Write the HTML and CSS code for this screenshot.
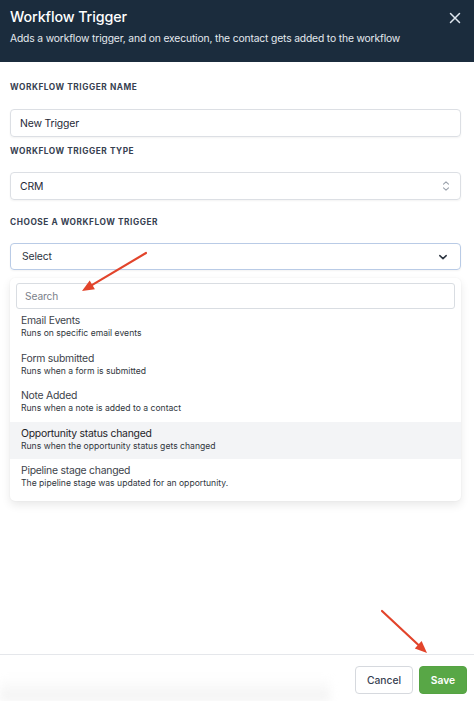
FILE: index.html
```html
<!DOCTYPE html>
<html lang="en">
<head>
<meta charset="utf-8">
<title>Workflow Trigger</title>
<link rel="stylesheet" href="styles.css">
</head>
<body>
<div class="page">
  <header class="header">
    <div class="header-text">
      <h1 class="title">Workflow Trigger</h1>
      <p class="subtitle">Adds a workflow trigger, and on execution, the contact gets added to the workflow</p>
    </div>
    <button class="close" aria-label="Close">
      <svg width="12" height="12" viewBox="0 0 12 12"><path d="M1.5 1.5L10.5 10.5M10.5 1.5L1.5 10.5" stroke="#dfe6ee" stroke-width="1.5" stroke-linecap="round"/></svg>
    </button>
  </header>

  <main class="content">
    <div class="field field-name">
      <label class="label">Workflow Trigger Name</label>
      <div class="input">New Trigger</div>
    </div>
    <div class="field field-type">
      <label class="label">Workflow Trigger Type</label>
      <div class="input select">
        <span>CRM</span>
        <svg class="updown" width="8" height="12" viewBox="0 0 8 12"><path d="M1.5 4.2L4 1.8L6.5 4.2M1.5 7.8L4 10.2L6.5 7.8" fill="none" stroke="#9aa1ab" stroke-width="1.1" stroke-linecap="round" stroke-linejoin="round"/></svg>
      </div>
    </div>
    <div class="field field-trigger">
      <label class="label">Choose a Workflow Trigger</label>
      <div class="input select focus">
        <span>Select</span>
        <svg class="chev" width="10" height="8" viewBox="0 0 10 8"><path d="M1.8 2.6L5 5.6L8.2 2.6" fill="none" stroke="#2d3540" stroke-width="1.5" stroke-linecap="round" stroke-linejoin="round"/></svg>
      </div>
    </div>

    <div class="dropdown">
      <div class="search">Search</div>
      <ul class="options">
        <li class="option"><span class="opt-title">Email Events</span><span class="opt-desc">Runs on specific email events</span></li>
        <li class="option"><span class="opt-title">Form submitted</span><span class="opt-desc">Runs when a form is submitted</span></li>
        <li class="option"><span class="opt-title">Note Added</span><span class="opt-desc">Runs when a note is added to a contact</span></li>
        <li class="option active"><span class="opt-title">Opportunity status changed</span><span class="opt-desc">Runs when the opportunity status gets changed</span></li>
        <li class="option"><span class="opt-title">Pipeline stage changed</span><span class="opt-desc">The pipeline stage was updated for an opportunity.</span></li>
      </ul>
    </div>
  </main>

  <footer class="footer">
    <button class="btn btn-cancel">Cancel</button>
    <button class="btn btn-save">Save</button>
  </footer>

  <svg class="annotations" width="474" height="701" viewBox="0 0 474 701">
    <line x1="146" y1="253" x2="92.3" y2="284.9" stroke="#e2442b" stroke-width="2.2" stroke-linecap="round"/>
    <polygon points="82,291 94.9,289.2 89.7,280.6" fill="#e2442b"/>
    <line x1="382" y1="611" x2="418.2" y2="644.8" stroke="#e2442b" stroke-width="2.2" stroke-linecap="round"/>
    <polygon points="427,653 414.8,648.5 421.6,641.1" fill="#e2442b"/>
  </svg>
</div>
</body>
</html>
```

FILE: styles.css
```css
* {
  box-sizing: border-box;
}

html, body {
  margin: 0;
  padding: 0;
  background: #ffffff;
}

body {
  font-family: Inter, "Noto Sans", "Liberation Sans", sans-serif;
  color: #1f2937;
}

.page {
  position: relative;
  width: 474px;
  height: 701px;
  display: flex;
  flex-direction: column;
  overflow: hidden;
}

.header {
  background: #1b2c3d;
  height: 62px;
  padding: 7px 12px 0 10px;
  display: flex;
  justify-content: space-between;
  align-items: flex-start;
}

.title {
  margin: 0;
  font-size: 14.3px;
  line-height: 20px;
  font-weight: 500;
  color: #ffffff;
  letter-spacing: -0.1px;
}

.subtitle {
  margin: 3px 0 0;
  font-size: 10.3px;
  line-height: 16px;
  color: #e4e9ef;
  letter-spacing: -0.15px;
}

.close {
  background: none;
  border: 0;
  padding: 0;
  margin-top: 4px;
  width: 14px;
  height: 14px;
  display: flex;
  align-items: center;
  justify-content: center;
}

.content {
  flex: 1;
  padding: 18px 13px 0 10px;
  display: flex;
  flex-direction: column;
}

.field {
  display: flex;
  flex-direction: column;
}

.label {
  font-size: 8.3px;
  line-height: 14px;
  font-weight: 700;
  letter-spacing: 0.55px;
  text-transform: uppercase;
  color: #374151;
}

.field-name .label { margin-bottom: 15px; }
.field-type { margin-top: 7px; }
.field-type .label { margin-bottom: 14px; }
.field-trigger { margin-top: 15px; }
.field-trigger .label { margin-bottom: 14px; }

.input {
  height: 28px;
  border: 1px solid #dcdfe4;
  border-radius: 4px;
  padding: 0 9px;
  display: flex;
  align-items: center;
  font-size: 10.4px;
  letter-spacing: -0.15px;
  color: #1f2937;
  box-shadow: 0 1px 2px rgba(0, 0, 0, 0.05);
}

.select {
  justify-content: space-between;
}

.updown {
  margin-right: 1px;
}

.focus {
  height: 27px;
  border-color: #b9cbe6;
  padding: 0 12px 0 11px;
  color: #2b333d;
}

.dropdown {
  margin-top: 8px;
  border-radius: 5px;
  background: #ffffff;
  box-shadow: 0 4px 10px rgba(0, 0, 0, 0.09), 0 0 2px rgba(0, 0, 0, 0.06);
  padding: 5px 0 4px;
}

.search {
  margin: 0 6px;
  height: 26px;
  border: 1px solid #d9dde2;
  border-radius: 3px;
  padding: 0 8px;
  display: flex;
  align-items: center;
  font-size: 10.2px;
  letter-spacing: -0.1px;
  color: #7b818a;
}

.options {
  list-style: none;
  margin: 0;
  padding: 0;
}

.option {
  display: flex;
  flex-direction: column;
  padding: 5px 11px 6.6px;
}

.option.active {
  background: #f3f4f6;
}

.opt-title {
  font-size: 10.4px;
  line-height: 13px;
  letter-spacing: -0.25px;
  color: #3d434b;
}

.option.active .opt-title {
  color: #1f2328;
}

.opt-desc {
  font-size: 8.6px;
  line-height: 13px;
  color: #30363d;
}

.footer {
  position: relative;
  height: 47px;
  border-top: 1px solid #e5e7eb;
  display: flex;
  justify-content: flex-end;
  align-items: flex-start;
  gap: 6px;
  padding: 11px 7px 0 0;
}

.footer::before {
  content: "";
  position: absolute;
  left: 0;
  bottom: 0;
  width: 330px;
  height: 24px;
  background: linear-gradient(to bottom, rgba(255, 255, 255, 0), rgba(228, 228, 228, 0.5));
  filter: blur(4px);
}

.btn {
  height: 28px;
  border-radius: 4px;
  font-family: inherit;
  font-size: 10.3px;
  font-weight: 500;
  padding: 0;
  position: relative;
}

.btn-cancel {
  width: 58px;
  background: #ffffff;
  border: 1px solid #d6d9de;
  color: #374151;
}

.btn-save {
  width: 48px;
  background: #58a746;
  border: 1px solid #55a343;
  color: #ffffff;
  font-weight: 600;
}

.annotations {
  position: absolute;
  left: 0;
  top: 0;
  pointer-events: none;
}
```
